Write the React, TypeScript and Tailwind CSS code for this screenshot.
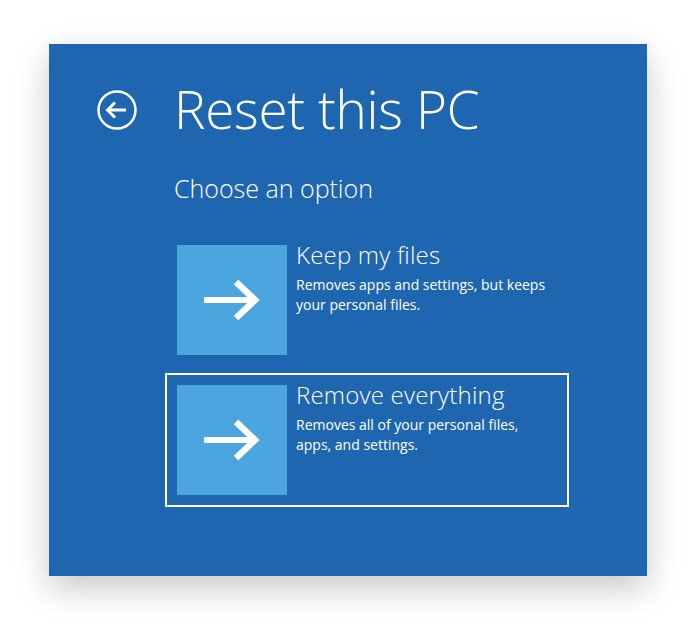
import React from 'react'

function BackIcon() {
  return (
    <svg width="42" height="42" viewBox="0 0 42 42" fill="none" stroke="white">
      <circle cx="21" cy="21" r="18.5" strokeWidth="2.5" />
      <path d="M12 21h18M19 13.5L11.5 21l7.5 7.5" strokeWidth="3" strokeLinecap="butt" strokeLinejoin="miter" />
    </svg>
  )
}

function TileArrow() {
  return (
    <svg width="56" height="40" viewBox="0 0 56 40" fill="none" stroke="white">
      <path d="M0 20h48" strokeWidth="6" />
      <path d="M32 2l19 18-19 18" strokeWidth="6.5" strokeLinejoin="miter" />
    </svg>
  )
}

const options = [
  {
    title: 'Keep my files',
    desc: ['Removes apps and settings, but keeps', 'your personal files.'],
    selected: false,
  },
  {
    title: 'Remove everything',
    desc: ['Removes all of your personal files,', 'apps, and settings.'],
    selected: true,
  },
]

export default function App() {
  return (
    <div className="w-[697px] h-[624px] bg-white pt-[44px] pl-[49px]" style={{ fontFamily: '"Open Sans", "Noto Sans", sans-serif' }}>
      <div className="w-[598px] h-[532px] bg-[#1f66b1] text-white shadow-[0_12px_32px_rgba(0,0,0,0.22)]">
        {/* header */}
        <div className="flex items-center pt-[45px] pl-[47px] h-[87px]">
          <BackIcon />
          <h1 className="ml-[36px] text-[53px] font-light leading-none tracking-[-0.3px] -mt-[4px]">Reset this PC</h1>
        </div>

        <div className="pl-[125px] mt-[45px] text-[25px] font-light leading-none">Choose an option</div>

        {/* options */}
        <div className="flex flex-col gap-[6px] pl-[116px] mt-[32px]">
          {options.map((o) => (
            <div
              key={o.title}
              className={`w-[404px] h-[134px] border-2 p-[10px] flex ${o.selected ? 'border-white' : 'border-transparent'}`}
            >
              <div className="w-[110px] h-[110px] bg-[#4ba5de] flex items-center justify-center shrink-0">
                <TileArrow />
              </div>
              <div className="ml-[9px] -mt-[7px]">
                <div className="text-[24px] font-light leading-[34px] tracking-[0.2px]">{o.title}</div>
                <div className="text-[14px] leading-[20px] mt-[3px]">
                  {o.desc.map((d) => (
                    <div key={d}>{d}</div>
                  ))}
                </div>
              </div>
            </div>
          ))}
        </div>
      </div>
    </div>
  )
}
